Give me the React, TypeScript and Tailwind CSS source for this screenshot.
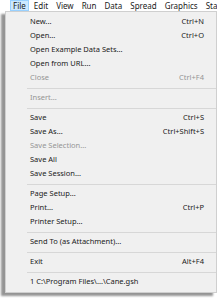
import React from 'react';

type Entry =
  | { kind: 'item'; label: string; shortcut?: string; disabled?: boolean }
  | { kind: 'sep' };

const menuBar = ['File', 'Edit', 'View', 'Run', 'Data', 'Spread', 'Graphics', 'Statistics'];

const entries: Entry[] = [
  { kind: 'item', label: 'New...', shortcut: 'Ctrl+N' },
  { kind: 'item', label: 'Open...', shortcut: 'Ctrl+O' },
  { kind: 'item', label: 'Open Example Data Sets...' },
  { kind: 'item', label: 'Open from URL...' },
  { kind: 'item', label: 'Close', shortcut: 'Ctrl+F4', disabled: true },
  { kind: 'sep' },
  { kind: 'item', label: 'Insert...', disabled: true },
  { kind: 'sep' },
  { kind: 'item', label: 'Save', shortcut: 'Ctrl+S' },
  { kind: 'item', label: 'Save As...', shortcut: 'Ctrl+Shift+S' },
  { kind: 'item', label: 'Save Selection...', disabled: true },
  { kind: 'item', label: 'Save All' },
  { kind: 'item', label: 'Save Session...' },
  { kind: 'sep' },
  { kind: 'item', label: 'Page Setup...' },
  { kind: 'item', label: 'Print...', shortcut: 'Ctrl+P' },
  { kind: 'item', label: 'Printer Setup...' },
  { kind: 'sep' },
  { kind: 'item', label: 'Send To (as Attachment)...' },
  { kind: 'sep' },
  { kind: 'item', label: 'Exit', shortcut: 'Alt+F4' },
  { kind: 'sep' },
  { kind: 'item', label: '1 C:\\Program Files\\...\\Cane.gsh' },
];

export default function App() {
  return (
    <div
      className="w-[217px] h-[300px] bg-white overflow-hidden text-[#1a1a1a] leading-none"
      style={{ fontFamily: '"Noto Sans", "Open Sans", sans-serif' }}
    >
      {/* menu bar */}
      <div className="flex h-[11px] items-stretch pl-[10px] whitespace-nowrap text-[8px] overflow-hidden">
        {menuBar.map((m, i) => (
          <div
            key={m}
            className={`flex items-center px-[2px] mr-[2px] border ${
              i === 0 ? 'bg-[#cce8ff] border-[#99d1ff]' : 'border-transparent'
            }`}
          >
            {m}
          </div>
        ))}
      </div>

      {/* dropdown */}
      <div className="ml-[5px] w-[212px] bg-[#f0f0f0] border border-[#cfcfcf] pt-[3px] pb-[3px] text-[7.5px] shadow-[-4px_3px_2px_rgba(0,0,0,0.42)]">
        {entries.map((e, i) =>
          e.kind === 'sep' ? (
            <div key={i} className="h-[6px] flex items-center pl-[21px]">
              <div className="h-px w-full bg-[#d7d7d7]" />
            </div>
          ) : (
            <div
              key={i}
              className={`h-[14px] flex items-center justify-between pl-[24px] pr-[12px] whitespace-nowrap ${
                e.disabled ? 'text-[#959595]' : ''
              }`}
            >
              <span>{e.label}</span>
              {e.shortcut && <span>{e.shortcut}</span>}
            </div>
          )
        )}
      </div>
    </div>
  );
}
